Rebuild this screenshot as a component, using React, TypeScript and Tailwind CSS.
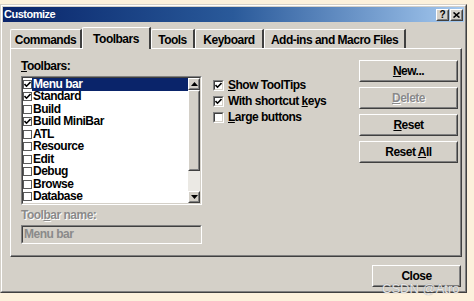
import React from "react";

const raisedOuter = "border border-t-white border-l-white border-r-[#404040] border-b-[#404040]";
const raisedInner = "border border-t-[#d4d0c8] border-l-[#d4d0c8] border-r-[#808080] border-b-[#808080]";
const sunkenOuter = "border border-t-[#808080] border-l-[#808080] border-r-white border-b-white";
const sunkenInner = "border border-t-[#404040] border-l-[#404040] border-r-[#d4d0c8] border-b-[#d4d0c8]";

function Check({ className = "" }: { className?: string }) {
  return (
    <svg width="7" height="7" viewBox="0 0 7 7" className={className}>
      <path d="M0.5 3 L2.5 5.2 L6.5 1" stroke="#000" strokeWidth="1.6" fill="none" />
    </svg>
  );
}

function Btn({ children, className = "", disabled = false }: { children: React.ReactNode; className?: string; disabled?: boolean }) {
  return (
    <div className={`${raisedOuter} bg-[#d4d0c8] ${className}`}>
      <div className={`${raisedInner} w-full h-full flex items-center justify-center ${disabled ? "text-[#8a8a8a] [text-shadow:1px_1px_0_#ffffff]" : "text-black"}`}>
        <span>{children}</span>
      </div>
    </div>
  );
}

function Tab({ label, width, active = false }: { label: string; width: string; active?: boolean }) {
  if (active) {
    return (
      <div className={`${width} h-[22px] relative z-10 -mb-[1px] bg-[#d4d0c8] border-t border-l border-t-white border-l-white border-r-2 border-r-[#404040] rounded-tl-[2px] flex items-center justify-center pt-[1px]`}>
        {label}
      </div>
    );
  }
  return (
    <div className={`${width} h-[19px] mt-[2px] bg-[#d4d0c8] border-t border-l border-t-white border-l-white border-r-2 border-r-[#404040] rounded-tl-[2px] flex items-center justify-center pt-[2px]`}>
      {label}
    </div>
  );
}

const items: [string, boolean][] = [
  ["Menu bar", true],
  ["Standard", true],
  ["Build", false],
  ["Build MiniBar", true],
  ["ATL", false],
  ["Resource", false],
  ["Edit", false],
  ["Debug", false],
  ["Browse", false],
  ["Database", false],
];

function ArrowUp() {
  return (
    <svg width="7" height="4" viewBox="0 0 7 4">
      <path d="M3.5 0 L7 4 L0 4 Z" fill="#000" />
    </svg>
  );
}
function ArrowDown() {
  return (
    <svg width="7" height="4" viewBox="0 0 7 4">
      <path d="M0 0 L7 0 L3.5 4 Z" fill="#000" />
    </svg>
  );
}

function SmallCheck({ checked, label }: { checked: boolean; label: React.ReactNode }) {
  return (
    <div className="flex items-center h-[16px]">
      <div className={`${sunkenOuter} w-[11px] h-[11px]`}>
        <div className="w-full h-full bg-white border border-t-[#404040] border-l-[#404040] border-r-[#d4d0c8] border-b-[#d4d0c8] flex items-center justify-center">
          {checked && <Check />}
        </div>
      </div>
      <span className="ml-[4px]">{label}</span>
    </div>
  );
}

export default function App() {
  return (
    <div
      className="w-[474px] h-[301px] bg-[#fcf1dc] overflow-hidden relative text-[12px] font-bold tracking-[-0.5px] leading-[13px] text-black"
      style={{ fontFamily: "'Liberation Sans', Arial, sans-serif" }}
    >
      <div className="mt-[4px] w-[467px] h-[289px] border border-t-[#d4d0c8] border-l-[#d4d0c8] border-r-[#404040] border-b-[#404040]">
        <div className="w-full h-full border border-t-white border-l-white border-r-[#808080] border-b-[#808080] bg-[#d4d0c8] p-[1px] flex flex-col">
          {/* Title bar */}
          <div className="h-[15px] bg-gradient-to-r from-[#0a246a] via-[#2a5a9a] to-[#a6caf0] flex items-center justify-between">
            <span className="ml-[1px] text-white text-[11px] tracking-[-0.5px]">Customize</span>
            <div className="flex gap-[1px] mr-[1px]">
              <div className={`${raisedOuter} bg-[#d4d0c8] w-[13px] h-[12px]`}>
                <div className={`${raisedInner} w-full h-full flex items-center justify-center text-[10px] leading-[10px] tracking-normal`}>?</div>
              </div>
              <div className={`${raisedOuter} bg-[#d4d0c8] w-[13px] h-[12px]`}>
                <div className={`${raisedInner} w-full h-full flex items-center justify-center`}>
                  <svg width="7" height="6" viewBox="0 0 7 6">
                    <path d="M0.5 0.5 L6.5 5.5 M6.5 0.5 L0.5 5.5" stroke="#000" strokeWidth="1.6" />
                  </svg>
                </div>
              </div>
            </div>
          </div>

          {/* Tabs */}
          <div className="pl-[7px] pr-[2px] mt-[5px] flex flex-col">
            <div className="flex items-start h-[21px]">
              <Tab label="Commands" width="w-[72px]" />
              <Tab label="Toolbars" width="w-[69px]" active />
              <Tab label="Tools" width="w-[44px]" />
              <Tab label="Keyboard" width="w-[69px]" />
              <Tab label="Add-ins and Macro Files" width="w-[142px]" />
            </div>
            {/* Panel */}
            <div className="w-[452px] h-[209px] border-t border-l border-t-white border-l-white border-r border-b border-r-[#404040] border-b-[#404040]">
              <div className="w-full h-full border-r border-b border-r-[#808080] border-b-[#808080] flex pl-[10px] pt-[11px] pr-[2px]">
                {/* Left column */}
                <div className="w-[181px] flex flex-col">
                  <div className="h-[13px]"><span className="underline underline-offset-1">T</span>oolbars:</div>
                  <div className={`${sunkenOuter} mt-[3px] h-[129px] w-full`}>
                    <div className={`${sunkenInner} w-full h-full bg-white flex`}>
                      <div className="flex-1 flex flex-col">
                        {items.map(([name, checked], i) => (
                          <div key={name} className="flex items-center h-[12.5px] leading-[11px]">
                            <div className="w-[9px] h-[9px] border border-[#5a5a5a] bg-white flex items-center justify-center shrink-0">
                              {checked && <Check />}
                            </div>
                            <div className={`flex-1 h-full flex items-center pl-[1px] ${i === 0 ? "bg-[#0a246a] text-white" : ""}`}>
                              <span className="leading-[11px]">{name}</span>
                            </div>
                          </div>
                        ))}
                      </div>
                      {/* scrollbar */}
                      <div className="w-[12px] flex flex-col bg-[#ebe9e4]">
                        <div className={`${raisedOuter} bg-[#d4d0c8] h-[12px]`}>
                          <div className={`${raisedInner} w-full h-full flex items-center justify-center`}><ArrowUp /></div>
                        </div>
                        <div className={`${raisedOuter} bg-[#d4d0c8] h-[81px]`}>
                          <div className={`${raisedInner} w-full h-full`} />
                        </div>
                        <div className="flex-1" />
                        <div className={`${raisedOuter} bg-[#d4d0c8] h-[12px]`}>
                          <div className={`${raisedInner} w-full h-full flex items-center justify-center`}><ArrowDown /></div>
                        </div>
                      </div>
                    </div>
                  </div>
                  <div className="mt-[4px] h-[13px] text-[#8a8a8a] [text-shadow:1px_1px_0_#ffffff]">
                    Tool<span className="underline underline-offset-1">b</span>ar name:
                  </div>
                  <div className={`${sunkenOuter} mt-[3px] h-[19px] w-full`}>
                    <div className={`${sunkenInner} w-full h-full bg-[#d4d0c8] flex items-center pl-[1px] text-[#8a8a8a]`}>Menu bar</div>
                  </div>
                </div>
                {/* Middle column */}
                <div className="ml-[11px] mt-[17px] flex flex-col">
                  <SmallCheck checked label={<><span className="underline underline-offset-1">S</span>how ToolTips</>} />
                  <SmallCheck checked label={<>With shortcut <span className="underline underline-offset-1">k</span>eys</>} />
                  <SmallCheck checked={false} label={<><span className="underline underline-offset-1">L</span>arge buttons</>} />
                </div>
                {/* Right column */}
                <div className="ml-auto flex flex-col gap-[5px]">
                  <Btn className="w-[99px] h-[22px]"><span className="underline underline-offset-1">N</span>ew...</Btn>
                  <Btn className="w-[99px] h-[22px]" disabled><span className="underline underline-offset-1">D</span>elete</Btn>
                  <Btn className="w-[99px] h-[22px]"><span className="underline underline-offset-1">R</span>eset</Btn>
                  <Btn className="w-[99px] h-[22px]">Reset <span className="underline underline-offset-1">A</span>ll</Btn>
                </div>
              </div>
            </div>
            <div className="flex justify-end mt-[8px] pr-[1px]">
              <Btn className="w-[89px] h-[22px]">Close</Btn>
            </div>
          </div>
        </div>
      </div>
      <div className="absolute left-[382px] top-[282px] text-[13px] font-normal tracking-[0px] text-white/80 [text-shadow:0_0_1px_#777]">
        CSDN @Atro
      </div>
    </div>
  );
}
